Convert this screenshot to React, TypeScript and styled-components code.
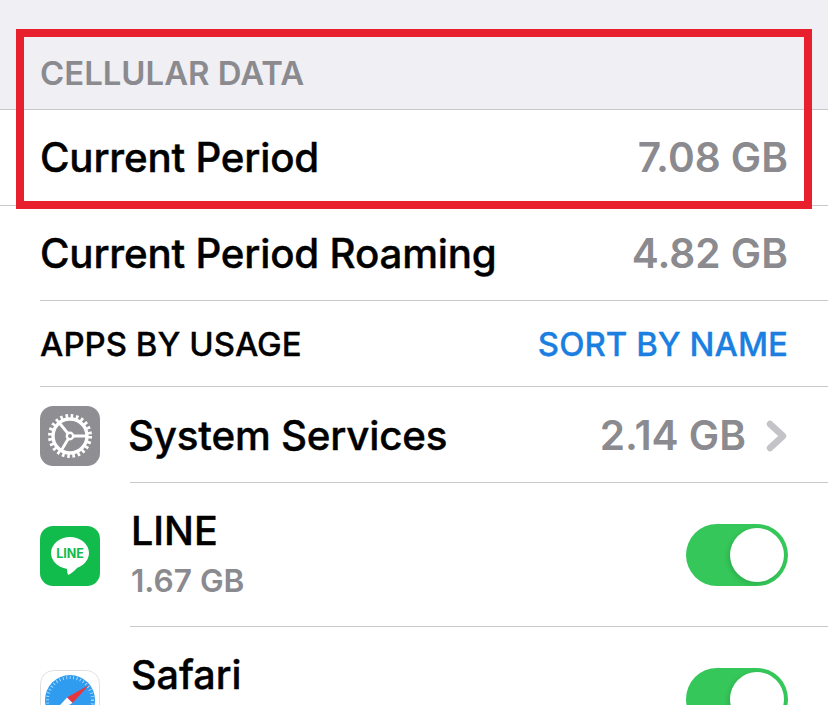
import React from 'react'
import styled, { createGlobalStyle } from 'styled-components'

const GlobalStyle = createGlobalStyle`
  html, body {
    margin: 0;
    padding: 0;
    background: #fff;
    overflow: hidden;
  }
  * { box-sizing: border-box; }
`

const Screen = styled.div`
  position: relative;
  width: 828px;
  height: 705px;
  overflow: hidden;
  background: #fff;
  font-family: Inter, "Liberation Sans", sans-serif;
  color: #000;
`

const SectionHeader = styled.div`
  height: 110px;
  padding: 54px 40px 0 40px;
  background: #efeff4;
  border-bottom: 1px solid #c8c7cc;
  font-size: 32.9px;
  line-height: 38px;
  font-weight: 600;
  color: #8a8a8f;
`

const Highlight = styled.div`
  position: absolute;
  left: 16px;
  top: 29px;
  width: 796px;
  height: 180px;
  border: 8px solid #e8202e;
`

const Row = styled.div<{ $height: number; $fullLine?: boolean }>`
  height: ${(p) => p.$height}px;
  margin-left: ${(p) => (p.$fullLine ? 0 : 40)}px;
  padding-left: ${(p) => (p.$fullLine ? 40 : 0)}px;
  padding-right: 40px;
  display: flex;
  align-items: center;
  justify-content: space-between;
  border-bottom: 1px solid #c8c7cc;
`

const Label = styled.span`
  font-size: 40.3px;
  font-weight: 500;
  letter-spacing: -0.2px;
  -webkit-text-stroke: 0.4px currentColor;
`

const ServiceLabel = styled(Label)`
  margin-left: -2px;
`

const Value = styled.span`
  font-size: 40.6px;
  font-weight: 600;
  color: #8a8a8f;
`

const SubHeading = styled.span`
  font-size: 33px;
  font-weight: 500;
  padding-top: 1px;
  -webkit-text-stroke: 0.3px currentColor;
`

const SortLink = styled(SubHeading)`
  color: #1a7fe0;
`

const AppRow = styled.div<{ $height: number }>`
  height: ${(p) => p.$height}px;
  padding-left: 40px;
  display: flex;
  align-items: center;
`

const IconSlot = styled.div<{ $nudge?: number }>`
  width: 60px;
  height: 60px;
  flex: none;
  margin-top: ${(p) => p.$nudge ?? 0}px;
  border-radius: 13px;
  overflow: hidden;
`

const AppBody = styled.div<{ $nudge?: number }>`
  flex: 1;
  height: 100%;
  margin-left: 30px;
  padding-top: ${(p) => p.$nudge ?? 0}px;
  padding-right: 40px;
  display: flex;
  align-items: center;
  justify-content: space-between;
  border-bottom: 1px solid #c8c7cc;
`

const AppInfo = styled.div`
  display: flex;
  flex-direction: column;
  margin-left: 1px;
  padding-bottom: 2px;
`

const AppName = styled.span`
  font-size: 39.5px;
  line-height: 54px;
  font-weight: 500;
  -webkit-text-stroke: 0.4px currentColor;
`

const AppUsage = styled.span`
  min-height: 46px;
  font-size: 31.6px;
  line-height: 46px;
  font-weight: 600;
  color: #8a8a8f;
`

const Trailing = styled.div`
  display: flex;
  align-items: center;
  gap: 20px;
`

const Toggle = styled.div`
  width: 102px;
  height: 62px;
  flex: none;
  border-radius: 31px;
  background: #35c759;
  display: flex;
  justify-content: flex-end;
  padding: 4px;
`

const Knob = styled.div`
  width: 54px;
  height: 54px;
  border-radius: 50%;
  background: #fff;
  box-shadow: -2px 2px 5px rgba(0, 0, 0, 0.12);
`

const GearIcon = () => (
  <svg width="60" height="60" viewBox="0 0 60 60" fill="none" stroke="#fff">
    <rect width="60" height="60" fill="#8e8e93" stroke="none" />
    <circle cx="30" cy="30" r="17" strokeWidth="3.4" />
    <circle cx="30" cy="30" r="20" strokeWidth="4" strokeDasharray="2.6 2.64" />
    <circle cx="30" cy="30" r="3.2" strokeWidth="2.4" />
    <path d="M33.2 30H47M28 27.500L19 16.500M28.300 32.800L21 45" strokeWidth="2.8" />
  </svg>
)

const LineIcon = () => (
  <svg width="60" height="60" viewBox="0 0 60 60">
    <rect width="60" height="60" fill="#12bc4c" />
    <ellipse cx="30" cy="27" rx="19" ry="16" fill="#fff" />
    <path d="M26 41C27.500 43 27 47 28 48.500C29 49.500 33 46.500 40 39Z" fill="#fff" />
    <text
      x="30"
      y="31.500"
      textAnchor="middle"
      fontSize="12.500"
      fontWeight="700"
      fill="#12bc4c"
      fontFamily="Inter, sans-serif"
    >
      LINE
    </text>
  </svg>
)

const SafariIcon = () => (
  <svg width="60" height="60" viewBox="0 0 60 60">
    <rect x="0.500" y="0.500" width="59" height="59" rx="13" fill="#fff" stroke="#dedede" />
    <circle cx="30" cy="30" r="25" fill="#2f9cf0" />
    <circle cx="30" cy="30" r="22.500" fill="none" stroke="#a9d8fa" strokeWidth="3" strokeDasharray="1 2.500" />
    <path d="M49 15L27 27.500L32.500 33Z" fill="#e8343c" />
    <path d="M11 45L32.500 33L27 27.500Z" fill="#fff" />
  </svg>
)

const Chevron = () => (
  <svg width="22" height="32" viewBox="0 0 22 32" fill="none">
    <path d="M4 4L17 16L4 28" stroke="#c4c4c8" strokeWidth="6.500" strokeLinecap="round" strokeLinejoin="round" />
  </svg>
)

const SwitchOn = () => (
  <Toggle>
    <Knob />
  </Toggle>
)

export default function App() {
  return (
    <Screen>
      <GlobalStyle />
      <SectionHeader>CELLULAR DATA</SectionHeader>
      <Row $height={96} $fullLine>
        <Label>Current Period</Label>
        <Value>7.08 GB</Value>
      </Row>
      <Row $height={95}>
        <Label>Current Period Roaming</Label>
        <Value>4.82 GB</Value>
      </Row>
      <Row $height={86}>
        <SubHeading>APPS BY USAGE</SubHeading>
        <SortLink>SORT BY NAME</SortLink>
      </Row>
      <AppRow $height={96}>
        <IconSlot $nudge={2}>
          <GearIcon />
        </IconSlot>
        <AppBody $nudge={2}>
          <ServiceLabel>System Services</ServiceLabel>
          <Trailing>
            <Value>2.14 GB</Value>
            <Chevron />
          </Trailing>
        </AppBody>
      </AppRow>
      <AppRow $height={144}>
        <IconSlot $nudge={2}>
          <LineIcon />
        </IconSlot>
        <AppBody>
          <AppInfo>
            <AppName>LINE</AppName>
            <AppUsage>1.67 GB</AppUsage>
          </AppInfo>
          <SwitchOn />
        </AppBody>
      </AppRow>
      <AppRow $height={145}>
        <IconSlot>
          <SafariIcon />
        </IconSlot>
        <AppBody>
          <AppInfo>
            <AppName>Safari</AppName>
            <AppUsage />
          </AppInfo>
          <SwitchOn />
        </AppBody>
      </AppRow>
      <Highlight />
    </Screen>
  )
}
